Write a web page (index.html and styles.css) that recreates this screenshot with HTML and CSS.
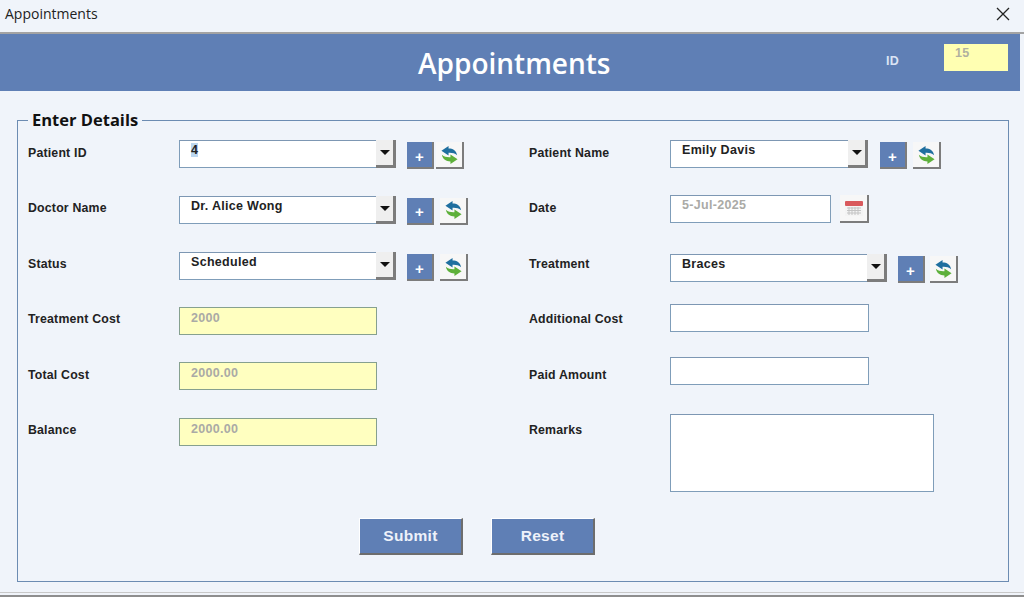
FILE: index.html
```html
<!DOCTYPE html>
<html lang="en">
<head>
<meta charset="utf-8">
<title>Appointments</title>
<link rel="stylesheet" href="styles.css">
</head>
<body>
<svg class="defs" width="0" height="0" aria-hidden="true">
  <symbol id="refresh" viewBox="0 0 20 20">
    <path d="M1.5 5.5L9 0.5V3.2C13.5 3.2 17 5.2 18 10.2C15.5 8 12.5 7.4 9 7.6V10.4Z" fill="#1f6f9f"/>
    <path d="M18.5 14.5L11 19.5V16.8C6.5 16.8 3 14.8 2 9.8C4.5 12 7.5 12.6 11 12.4V9.6Z" fill="#5db03a"/>
  </symbol>
</svg>
<div class="window">
  <div class="titlebar">
    <span class="titlebar-text">Appointments</span>
    <svg class="close" viewBox="0 0 14 14"><path d="M1 1L13 13M13 1L1 13" stroke="#222" stroke-width="1.3" fill="none"/></svg>
  </div>
  <header class="banner">
    <h1 class="banner-title">Appointments</h1>
    <span class="banner-id">ID</span>
    <div class="banner-value">15</div>
  </header>
  <section class="group">
    <h2 class="legend">Enter Details</h2>
    <div class="form">
      <div class="label">Patient ID</div>
      <div class="control">
        <div class="combo w217"><span class="value"><span class="selected">4</span></span><span class="arrow"></span></div>
        <button class="icon plus ml11">+</button><button class="icon swap ml2"><svg class="sync"><use href="#refresh"/></svg></button>
      </div>
      <div class="label">Patient Name</div>
      <div class="control">
        <div class="combo w198"><span class="value">Emily Davis</span><span class="arrow"></span></div>
        <button class="icon plus ml12">+</button><button class="icon swap ml6"><svg class="sync"><use href="#refresh"/></svg></button>
      </div>

      <div class="label">Doctor Name</div>
      <div class="control">
        <div class="combo w217"><span class="value">Dr. Alice Wong</span><span class="arrow"></span></div>
        <button class="icon plus ml11">+</button><button class="icon swap ml6"><svg class="sync"><use href="#refresh"/></svg></button>
      </div>
      <div class="label">Date</div>
      <div class="control up1">
        <div class="field white muted w161">5-Jul-2025</div>
        <button class="icon calendar ml9" aria-label="Calendar">
          <svg viewBox="0 0 20 20" width="20" height="20">
            <rect x="1" y="3" width="18" height="15" fill="#f4f4f4"/>
            <rect x="1" y="3" width="18" height="5" rx="1" fill="#d9595c"/>
            <path d="M3 10H17M3 12.5H17M3 15H17M5 9V17M8 9V17M11 9V17M14 9V17" stroke="#c4c4c4" stroke-width="1"/>
          </svg>
        </button>
      </div>

      <div class="label">Status</div>
      <div class="control down1">
        <div class="combo w217"><span class="value">Scheduled</span><span class="arrow"></span></div>
        <button class="icon plus ml11">+</button><button class="icon swap ml6"><svg class="sync"><use href="#refresh"/></svg></button>
      </div>
      <div class="label">Treatment</div>
      <div class="control down3">
        <div class="combo w217"><span class="value">Braces</span><span class="arrow"></span></div>
        <button class="icon plus ml11">+</button><button class="icon swap ml5"><svg class="sync"><use href="#refresh"/></svg></button>
      </div>

      <div class="label">Treatment Cost</div>
      <div class="control"><div class="field yellow muted w198">2000</div></div>
      <div class="label">Additional Cost</div>
      <div class="control up3"><div class="field white w199"></div></div>

      <div class="label">Total Cost</div>
      <div class="control"><div class="field yellow muted w198">2000.00</div></div>
      <div class="label">Paid Amount</div>
      <div class="control up5"><div class="field white w199"></div></div>

      <div class="label">Balance</div>
      <div class="control"><div class="field yellow muted w198">2000.00</div></div>
      <div class="label">Remarks</div>
      <div class="control up4"><div class="field white remarks"></div></div>
    </div>
    <div class="actions">
      <button class="action">Submit</button>
      <button class="action">Reset</button>
    </div>
  </section>
</div>
</body>
</html>
```

FILE: styles.css
```css
* { box-sizing: border-box; }
html, body { margin: 0; padding: 0; }
body {
  width: 1024px;
  height: 597px;
  overflow: hidden;
  background: #f0f4fa;
  font-family: "Liberation Sans", sans-serif;
  color: #1c1c1c;
}
.defs { position: absolute; }
.window {
  height: 597px;
  border-bottom: 2px solid #8e8e8e;
  display: flex;
  flex-direction: column;
  position: relative;
}
.window::after {
  content: "";
  position: absolute;
  left: 0;
  right: 0;
  bottom: 2px;
  height: 1px;
  background: #c8c8c8;
}
.titlebar {
  height: 34px;
  border-bottom: 2px solid #a3a3a3;
  display: flex;
  align-items: center;
  justify-content: space-between;
  padding: 0 14px 4px 5px;
}
.titlebar-text {
  font: 14px/18px "Open Sans", sans-serif;
  color: #222;
}
.close { width: 14px; height: 14px; }
.banner {
  width: 1020px;
  height: 57px;
  background: #5f7fb5;
  display: flex;
  align-items: center;
  padding-left: 418px;
}
.banner-title {
  margin: 1px 0 0;
  font: 600 28px/36px "Open Sans", sans-serif;
  color: #fff;
  width: 468px;
}
.banner-id {
  width: 58px;
  font-weight: 700;
  font-size: 12.5px;
  letter-spacing: 0.3px;
  color: #dbe4f4;
  margin-bottom: 3px;
}
.banner-value {
  width: 64px;
  height: 27px;
  margin-bottom: 10px;
  background: #ffffb2;
  color: #b0b0a0;
  font-weight: 700;
  font-size: 12.5px;
  letter-spacing: 0.3px;
  padding: 2px 0 0 11px;
}
.group {
  position: relative;
  margin: 29px 0 0 17px;
  width: 992px;
  height: 462px;
  border: 1px solid #6c8cb2;
  padding: 19px 10px 0;
}
.legend {
  position: absolute;
  left: 10px;
  top: -12px;
  margin: 0;
  padding: 0 4px;
  background: #f0f4fa;
  font: 700 16.5px/22px "Open Sans", sans-serif;
  color: #111;
}
.form {
  display: grid;
  grid-template-columns: 151px 350px 141px 1fr;
  grid-auto-rows: 55.6px;
}
.label {
  font-size: 12.3px;
  font-weight: 700;
  letter-spacing: 0.2px;
  line-height: 14px;
  padding-top: 5.5px;
  color: #222;
}
.control {
  display: flex;
  align-items: flex-start;
}
.up1 { margin-top: -1px; }
.up3 { margin-top: -3px; }
.up4 { margin-top: -4px; }
.up5 { margin-top: -5px; }
.down1 { margin-top: 1px; }
.down3 { margin-top: 3px; }
.combo, .field {
  height: 28px;
  border: 1px solid #7f9db9;
  border-top-color: #7d97b3;
  font-size: 12.5px;
  font-weight: 700;
  letter-spacing: 0.3px;
  line-height: 14px;
}
.combo {
  display: flex;
  background: #fff;
  color: #222;
}
.w217 { width: 217px; }
.w198 { width: 198px; }
.w199 { width: 199px; }
.w161 { width: 161px; }
.value {
  flex: 1;
  padding: 2px 0 0 11px;
}
.selected { background: #bcd7ef; }
.arrow {
  width: 20px;
  margin: -1px -1px -1px 0;
  background: #efefef;
  border-right: 3px solid #7c7c7c;
  border-bottom: 3px solid #7c7c7c;
  display: flex;
  align-items: center;
  justify-content: center;
}
.arrow::after {
  content: "";
  border-top: 5px solid #111;
  border-left: 5px solid transparent;
  border-right: 5px solid transparent;
}
.field { padding: 2px 0 0 11px; }
.yellow { background: #ffffc0; border-color: #86a08f; padding-top: 3px; }
.white { background: #fff; }
.muted { color: #aaaaa6; }
.remarks { width: 264px; height: 78px; }
.icon {
  width: 27px;
  height: 27px;
  padding: 0;
  margin: 2px 0 0;
  border: 0;
  border-right: 2px solid #7c7c7c;
  border-bottom: 2px solid #7c7c7c;
  display: flex;
  align-items: center;
  justify-content: center;
  background: #f7f7f7;
}
.plus {
  background: #5f7fb5;
  color: #fff;
  font: 700 15px/1 "Liberation Sans", sans-serif;
  padding-top: 3px;
}
.swap { width: 28px; }
.calendar { width: 29px; height: 28px; margin-top: 0; }
.sync { width: 19px; height: 20px; }
.ml2 { margin-left: 2px; }
.ml5 { margin-left: 5px; }
.ml6 { margin-left: 6px; }
.ml9 { margin-left: 9px; }
.ml11 { margin-left: 11px; }
.ml12 { margin-left: 12px; }
.actions {
  display: flex;
  gap: 28px;
  margin: 44px 0 0 331px;
}
.action {
  width: 104px;
  height: 37px;
  background: #5f7fb5;
  border: 0;
  border-top: 1px solid #fff;
  border-left: 1px solid #fff;
  border-right: 2px solid #6d6d6d;
  border-bottom: 2px solid #6d6d6d;
  color: #eef2fa;
  font: 700 15.5px/1 "Liberation Sans", sans-serif;
  letter-spacing: 0.3px;
}
```
